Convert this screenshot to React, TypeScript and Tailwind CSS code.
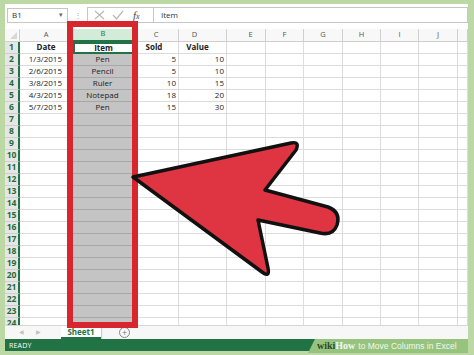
import React from "react";

const cols = ["A", "B", "C", "D", "E", "F", "G", "H", "I", "J", ""];
const data: string[][] = [
  ["Date", "Item", "Sold", "Value"],
  ["1/3/2015", "Pen", "5", "10"],
  ["2/6/2015", "Pencil", "5", "10"],
  ["3/8/2015", "Ruler", "10", "15"],
  ["4/3/2015", "Notepad", "18", "20"],
  ["5/7/2015", "Pen", "15", "30"],
];

const gridCols =
  "grid grid-cols-[15px_53px_61px_45px_48px_39px_38px_39px_38px_38px_39px_10px]";

function Row({ n, short }: { n: number; short?: boolean }) {
  const r = data[n - 1];
  const bold = n === 1;
  return (
    <div className={`${gridCols} ${short ? "h-[8px] overflow-hidden" : "h-[12px]"}`}>
      <div className="h-[12px] bg-[#e6e6e6] border-r-2 border-r-[#217346] border-b border-b-[#cfcfcf] flex items-center justify-center text-[8.5px] font-bold text-[#1f6b3c] leading-none">
        {n}
      </div>
      {/* A */}
      <div
        className={`h-[12px] border-r border-b border-[#dcdcdc] flex items-center leading-none text-[8px] text-[#222] ${
          bold ? "justify-center font-bold pl-[0px]" : "justify-end pr-[10px]"
        }`}
      >
        {r ? r[0] : ""}
      </div>
      {/* B */}
      {n === 1 ? (
        <div className="h-[12px] bg-white border-2 border-[#217346] flex items-center justify-center text-[8px] font-bold text-[#222] leading-none">
          {r[1]}
        </div>
      ) : (
        <div className="h-[12px] bg-[#c4c4c4] border-b border-b-[#a8a8a8] border-r-2 border-r-[#217346] flex items-center justify-center text-[8px] text-[#222] leading-none">
          {r ? r[1] : ""}
        </div>
      )}
      {/* C */}
      <div
        className={`h-[12px] border-r border-b border-[#dcdcdc] flex items-center leading-none text-[8px] text-[#222] ${
          bold ? "justify-center font-bold pr-[4px]" : "justify-end pr-[2px]"
        }`}
      >
        {r ? r[2] : ""}
      </div>
      {/* D */}
      <div
        className={`h-[12px] border-r border-b border-[#dcdcdc] flex items-center leading-none text-[8px] text-[#222] ${
          bold ? "justify-center font-bold pr-[10px]" : "justify-end pr-[2px]"
        }`}
      >
        {r ? r[3] : ""}
      </div>
      {[0, 1, 2, 3, 4, 5, 6].map((i) => (
        <div key={i} className="h-[12px] border-r border-b border-[#dcdcdc]" />
      ))}
    </div>
  );
}

export default function App() {
  const rows = Array.from({ length: 23 }, (_, i) => i + 1);
  return (
    <div
      className="relative w-[474px] h-[355px] overflow-hidden bg-[#bcd8a4] pt-[4px] pl-[5px] pr-[6px] pb-[4px] flex flex-col"
      style={{ fontFamily: '"Open Sans", "Liberation Sans", sans-serif' }}
    >
      <div className="flex-1 flex flex-col bg-white overflow-hidden">
        {/* formula bar */}
        <div className="h-[24px] flex items-center bg-white pl-[2px] pt-[1px]">
          <div className="w-[61px] h-[15px] border border-[#c6c6c6] flex items-center justify-between px-[4px] text-[8px] text-[#333]">
            <span>B1</span>
            <span className="text-[7px] text-[#666]">▾</span>
          </div>
          <div className="w-[19px] flex justify-center text-[#aaa] text-[8px] leading-none">⋮</div>
          <div className="flex-1 h-[16px] border border-[#c6c6c6] flex items-center">
            <div className="w-[65px] h-full flex items-center pl-[6px] gap-[7px] text-[#bbb]">
              <svg width="11" height="10" viewBox="0 0 11 10">
                <path d="M1 1 L10 9 M10 1 L1 9" stroke="#b8b8b8" strokeWidth="1.2" />
              </svg>
              <svg width="12" height="10" viewBox="0 0 12 10">
                <path d="M1 5 L4.5 9 L11 1" stroke="#b8b8b8" strokeWidth="1.2" fill="none" />
              </svg>
              <span
                className="text-[11px] italic text-[#444] leading-none ml-[2px]"
                style={{ fontFamily: '"Liberation Serif", serif' }}
              >
                f<span className="text-[8px]">x</span>
              </span>
            </div>
            <div className="h-full border-l border-[#c6c6c6] flex items-center pl-[7px] text-[8px] text-[#333]">
              Item
            </div>
          </div>
        </div>
        <div className="h-[3px]" />
        {/* column header */}
        <div className={`${gridCols} h-[13px] bg-[#f8f8f8]`}>
          <div className="h-[13px] border-r border-b border-[#cfcfcf] relative">
            <div className="absolute right-[2px] bottom-[2px] w-0 h-0 border-l-[7px] border-l-transparent border-b-[7px] border-b-[#d8d8d8]" />
          </div>
          {cols.map((c, i) => (
            <div
              key={i}
              className={`h-[13px] flex items-center justify-center text-[7.5px] leading-none ${
                c === "B"
                  ? "bg-[#d3ebd9] text-[#217346] border-b-2 border-b-[#217346] border-r border-r-[#cfcfcf]"
                  : "text-[#555] border-r border-b border-[#cfcfcf]"
              } ${c === "D" ? "pr-[16px]" : ""} ${c === "E" ? "pl-[9px]" : ""}`}
            >
              {c}
            </div>
          ))}
        </div>
        {/* rows */}
        {rows.map((n) => (
          <Row key={n} n={n} />
        ))}
        <Row n={24} short />
        {/* sheet tabs */}
        <div className="flex-1 flex items-start bg-[#f7f7f7] border-t border-[#d6d6d6]">
          <div className="w-[56px] h-[13px] flex items-center pl-[14px] gap-[12px] text-[6px] text-[#c2c2c2]">
            <span>◀</span>
            <span>▶</span>
          </div>
          <div className="w-[40px] h-[13px] bg-white border-b-2 border-[#217346] shadow-[1px_0_1px_#ccc] flex items-center justify-center text-[8px] font-bold text-[#217346] leading-none">
            Sheet1
          </div>
          <div className="ml-[18px] mt-[1px] w-[11px] h-[11px] rounded-full border border-[#888] flex items-center justify-center text-[9px] text-[#777] leading-none">
            +
          </div>
        </div>
      </div>
      {/* status bar */}
      <div className="h-[12px] bg-[#217346] flex items-center justify-between">
        <span className="pl-[4px] text-[7px] text-white leading-none tracking-[0.2px]">READY</span>
        <div className="h-[14px] mt-[2px] w-[160px] bg-[#96c47f] [clip-path:polygon(7px_0,100%_0,100%_100%,0_100%)] flex items-center pl-[9px] whitespace-nowrap leading-none">
          <span
            className="text-[10px] font-bold text-[#2e4a25]"
            style={{ fontFamily: '"Liberation Serif", serif' }}
          >
            wiki
          </span>
          <span
            className="text-[10px] font-bold text-[#f3f7ee] mr-[3px]"
            style={{ fontFamily: '"Liberation Serif", serif' }}
          >
            How
          </span>
          <span
            className="text-[8.5px] text-[#f3f7ee]"
            style={{ fontFamily: '"Liberation Sans", sans-serif' }}
          >
            to Move Columns in Excel
          </span>
        </div>
      </div>

      {/* red box highlight */}
      <div className="absolute left-[67px] top-[21px] w-[71px] h-[307px] border-[6px] border-[#d8262f] pointer-events-none" />
      {/* arrow */}
      <svg
        className="absolute left-0 top-0 pointer-events-none"
        width="474"
        height="355"
        viewBox="0 0 474 355"
      >
        <path
          d="M133,177 L291,143 Q300,141 296,150 L265,190 L328,207 Q341,212 337,225 Q333,236 320,233 L258,220 L268,268 Q270,278 262,272 Z"
          fill="#df3441"
          stroke="#111"
          strokeWidth="3.5"
          strokeLinejoin="round"
        />
      </svg>
    </div>
  );
}
